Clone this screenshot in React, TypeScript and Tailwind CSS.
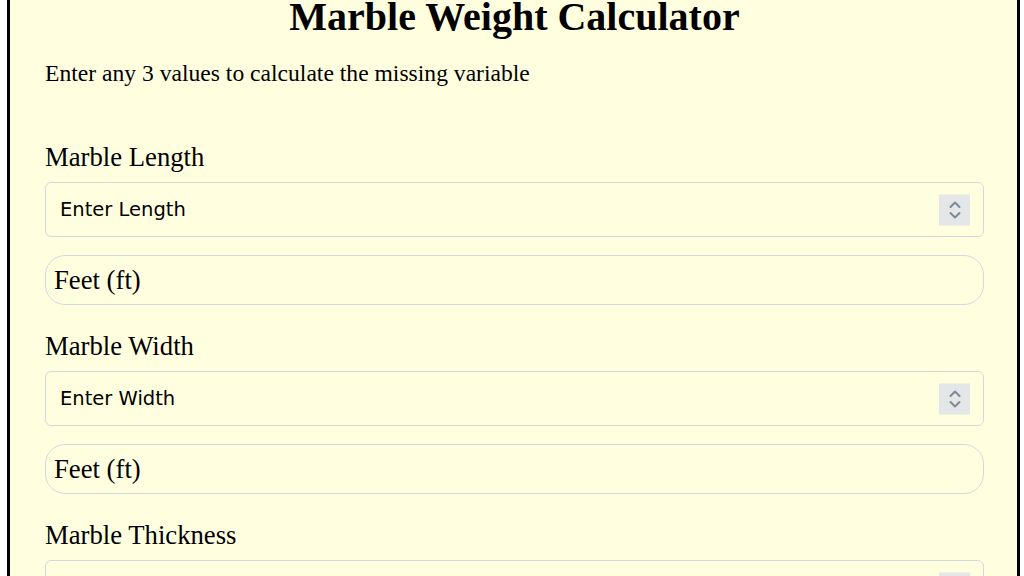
import React from 'react';

const fields = [
  { label: 'Marble Length', placeholder: 'Enter Length' },
  { label: 'Marble Width', placeholder: 'Enter Width' },
  { label: 'Marble Thickness', placeholder: 'Enter Thickness' },
];

const Spinner = () => (
  <div className="pointer-events-none absolute right-[14px] top-1/2 -translate-y-1/2 w-[31px] h-[31px] bg-[#e4e6e8] flex flex-col items-center justify-center gap-[3px]">
    <svg width="12" height="8" viewBox="0 0 12 8" fill="none">
      <path d="M1.5 6.5 L6 2 L10.5 6.5" stroke="#7d8a96" strokeWidth="2" strokeLinecap="round" strokeLinejoin="round" />
    </svg>
    <svg width="12" height="8" viewBox="0 0 12 8" fill="none">
      <path d="M1.5 1.5 L6 6 L10.5 1.5" stroke="#7d8a96" strokeWidth="2" strokeLinecap="round" strokeLinejoin="round" />
    </svg>
  </div>
);

export default function App() {
  return (
    <div className="min-h-screen bg-white overflow-hidden">
      <div className="ml-[7px] mt-[-10px] w-[1013px] border-[3px] border-black bg-[#ffffe0] pl-[35px] pr-[33px] pb-10 font-['Liberation_Serif',serif] text-black">
        <h1 className="mt-[-0.5px] text-center text-[40px] leading-[48px] font-bold">Marble Weight Calculator</h1>
        <p className="mt-[18.5px] text-[23.6px] leading-[28px]">Enter any 3 values to calculate the missing variable</p>

        <div className="mt-[54px] flex flex-col gap-[25px]">
          {fields.map((f) => (
            <div key={f.label} className="flex flex-col">
              <label className="text-[26.7px] leading-[32px]">{f.label}</label>
              <div className="relative mt-[9px]">
                <input
                  type="text"
                  placeholder={f.placeholder}
                  className="block w-full h-[55px] rounded-[6px] border border-[#d3d9df] bg-transparent pl-[14px] font-['DejaVu_Sans',sans-serif] text-[19.5px] text-black placeholder:text-black outline-none"
                />
                <Spinner />
              </div>
              <select
                defaultValue="ft"
                className="mt-[18px] block w-full h-[50px] appearance-none rounded-[20px] border border-[#d3d9df] bg-transparent pl-[8px] text-[26.7px] text-black outline-none"
              >
                <option value="ft">Feet (ft)</option>
                <option value="in">Inches (in)</option>
                <option value="m">Meters (m)</option>
                <option value="cm">Centimeters (cm)</option>
              </select>
            </div>
          ))}
        </div>
      </div>
    </div>
  );
}
